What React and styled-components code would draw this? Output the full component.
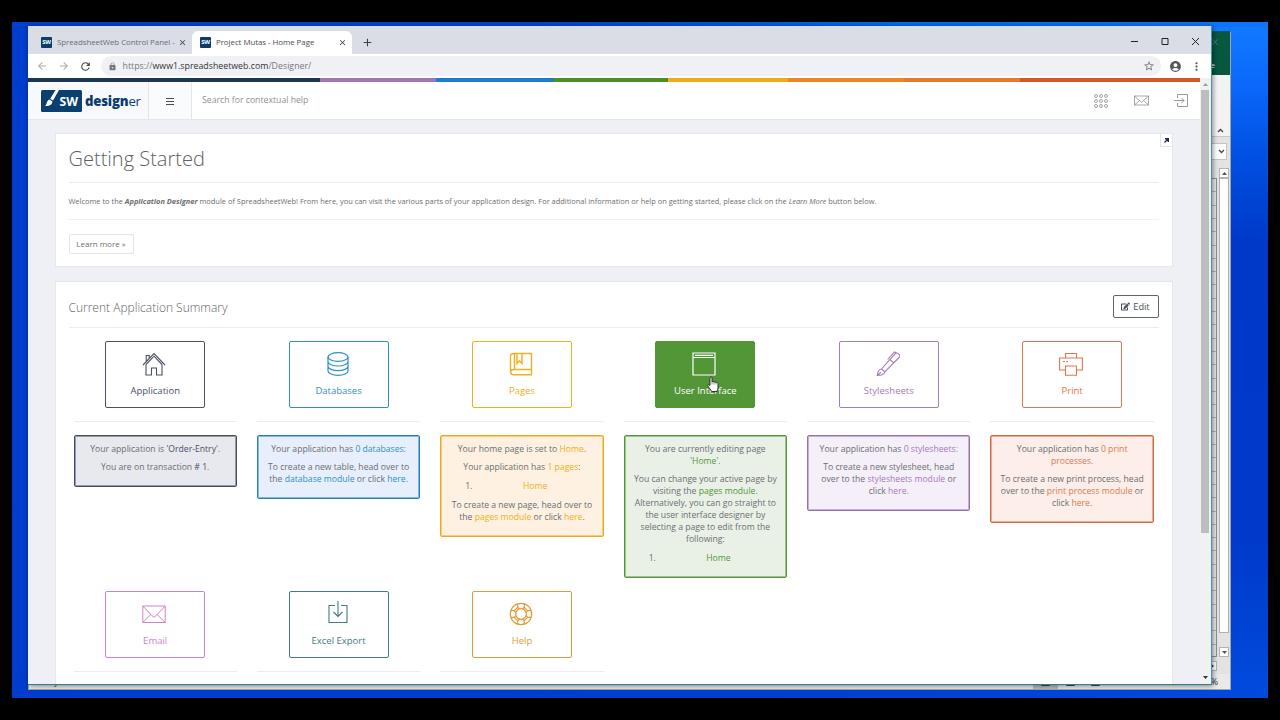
import styled, { createGlobalStyle } from "styled-components";
import { FaEdit } from "react-icons/fa";
import {
  MdAccountCircle,
  MdAdd,
  MdArrowBack,
  MdArrowForward,
  MdClose,
  MdLock,
  MdMoreVert,
  MdRefresh,
  MdStarBorder,
} from "react-icons/md";

const GlobalStyle = createGlobalStyle`
  * {
    box-sizing: border-box;
  }
  body {
    margin: 0;
    background: #000;
    font-family: "Open Sans", "Noto Sans", sans-serif;
    color: #6b6e71;
  }
`;

const Screen = styled.div`
  width: 1280px;
  height: 720px;
  padding: 22px 12px;
  background: #000;
  overflow: hidden;
`;
const Desktop = styled.div`
  position: relative;
  height: 676px;
  overflow: hidden;
  background:
    linear-gradient(90deg, #0040cc 0, #0044d2 42%, #0069ee 70%, #0f74fa 100%) top / 100% 5px no-repeat,
    linear-gradient(180deg, #1279ff 0, #0a68fa 60px, #0050e2 130px, #0039c8 215px, #003acb 520px, #004bdc 670px) right / 60px 669px no-repeat,
    linear-gradient(90deg, #003dcc 0, #003fd0 60%, #004bdc 100%);
`;

/* spreadsheet window behind the browser */
const SheetWindow = styled.div`
  position: absolute;
  left: 16px;
  top: 9px;
  width: 1203px;
  height: 659px;
  display: flex;
  flex-direction: column;
  background: #e3e3e3;
  border: 1px solid #9aa6ac;
  border-top-color: #0d5a58;
`;
const SheetTitle = styled.div`
  height: 43px;
  padding: 5px 10px 0 0;
  background: #08573f;
  color: #45776a;
  display: flex;
  flex-direction: column;
  align-items: flex-end;
  justify-content: space-between;
`;
const SheetShare = styled.span`
  margin-right: 5px;
  font-size: 8px;
  line-height: 14px;
  height: 17px;
  color: #fff;
`;
const SheetRibbon = styled.div`
  height: 62px;
  background: #f3f3f3;
  border-bottom: 1px solid #c8c8c8;
  display: flex;
  justify-content: flex-end;
  align-items: flex-end;
  padding: 0 6px 3px;
`;
const FormulaBar = styled.div`
  height: 31px;
  padding: 6px 3px 7px;
`;
const FormulaInput = styled.div`
  height: 17px;
  background: #fff;
  border: 1px solid #c4c4c4;
  display: flex;
  justify-content: flex-end;
  align-items: center;
  padding-right: 1px;
`;
const SheetBody = styled.div`
  flex: 1;
  min-height: 0;
  display: flex;
  justify-content: flex-end;
  gap: 2px;
  padding-right: 1px;
`;
const SheetLeft = styled.div`
  width: 40px;
  padding-top: 10px;
  display: flex;
  flex-direction: column;
  align-items: flex-end;
  gap: 4px;
`;
const SheetCells = styled.div`
  width: 39px;
  height: 479px;
  border: 1px solid #8e8e8e;
  background: repeating-linear-gradient(#e9e9e9 0 12.3px, #b4b4b4 12.3px 13.3px);
`;
const SheetScroll = styled.div`
  width: 10px;
  display: flex;
  flex-direction: column;
`;
const ScrollButton = styled.div`
  width: 10px;
  height: 10px;
  flex-shrink: 0;
  border: 1px solid #b4b4b4;
  background: #fff;
  display: flex;
  align-items: center;
  justify-content: center;
`;
const SheetThumb = styled.div`
  height: 455px;
  margin-bottom: 14px;
  flex-shrink: 0;
  background: #fff;
  border: 1px solid #b0b0b0;
`;
const StatusBar = styled.div`
  height: 15px;
  display: flex;
  justify-content: space-between;
  padding: 0 12px 0 5px;
  background: #e9e9e8;
  color: #333;
  font-size: 8.5px;
  line-height: 15px;
`;
const ViewButtons = styled.span`
  margin-left: auto;
  margin-right: 103px;
  display: flex;
  svg {
    width: 25px;
    height: 15px;
    background: transparent;
  }
  svg:first-child {
    background: #b9b9b8;
  }
`;

/* browser window */
const Browser = styled.div`
  position: absolute;
  left: 16px;
  top: 4px;
  width: 1184px;
  height: 659px;
  display: flex;
  flex-direction: column;
  background: #fff;
  border-right: 1px solid #3c93dc;
  border-bottom: 1px solid #2a7e9c;
  box-shadow: 1px 1px 5px rgba(0, 0, 0, 0.45);
`;
const TabStrip = styled.div`
  height: 28px;
  display: flex;
  align-items: flex-end;
  background: #dadde6;
  padding-left: 5px;
`;
const Tab = styled.div`
  width: ${(p) => p.$width}px;
  height: 23px;
  display: flex;
  align-items: center;
  padding: 0 5px 0 8px;
  font-size: 7.9px;
  letter-spacing: -0.05px;
  color: ${(p) => (p.$active ? "#4a4d52" : "#6a6e75")};
  background: ${(p) => (p.$active ? "#fff" : "transparent")};
  border-radius: 6px 6px 0 0;
  svg {
    color: #3c4043;
  }
`;
const TabTitle = styled.span`
  flex: 1;
  margin-left: 5px;
  padding-bottom: 1px;
  white-space: nowrap;
`;
const Favicon = styled.span`
  width: 11px;
  height: 11px;
  border-radius: 1px;
  background: #0b3c6c;
  color: #fff;
  font: 700 6px/10px "Open Sans", sans-serif;
  letter-spacing: -0.4px;
  text-align: center;
`;
const NewTab = styled.div`
  height: 23px;
  display: flex;
  align-items: center;
  padding-left: 9px;
  color: #3c4043;
`;
const WindowButtons = styled.div`
  margin-left: auto;
  height: 28px;
  padding: 4px 11px 0 0;
`;
const Toolbar = styled.div`
  height: 24px;
  display: flex;
  align-items: center;
  padding: 0 8px;
  color: #55585c;
`;
const NavIcon = styled.span`
  width: 21.5px;
  display: flex;
  color: ${(p) => (p.$dim ? "#a9abae" : "#44474b")};
`;
const AddressBar = styled.div`
  flex: 1;
  height: 20px;
  padding: 0 6px 0 7px;
  display: flex;
  align-items: center;
  background: #f0f1f4;
  border-radius: 10px;
  font-size: 8.8px;
  color: #75797e;
`;
const Url = styled.span`
  flex: 1;
  margin-left: 6px;
  b {
    font-weight: 400;
    color: #303236;
  }
`;
const ToolbarMenu = styled.div`
  display: flex;
  gap: 8px;
  margin-left: 8px;
`;
const Viewport = styled.div`
  flex: 1;
  min-height: 0;
  display: flex;
`;
const Page = styled.div`
  width: 1172px;
  display: flex;
  flex-direction: column;
  background: #eff0f6;
  overflow: hidden;
`;
const PageScrollbar = styled.div`
  flex: 1;
  display: flex;
  flex-direction: column;
  align-items: center;
  padding-right: 1px;
  background: #f2f1f2;
`;
const ScrollArrow = styled.div`
  height: 12px;
  display: flex;
  align-items: center;
`;
const ScrollThumb = styled.div`
  width: 8px;
  height: 443px;
  background: #bdbdbf;
  margin-bottom: 143px;
`;
const ColorBar = styled.div`
  height: 4px;
  flex-shrink: 0;
  display: flex;
`;
const ColorPart = styled.div`
  flex: ${(p) => p.$size};
  background: ${(p) => p.$color};
`;

/* designer page */
const Header = styled.header`
  height: 38px;
  flex-shrink: 0;
  display: flex;
  align-items: stretch;
  background: #fff;
  border-bottom: 1px solid #e5e6ea;
`;
const LogoBox = styled.div`
  width: 121px;
  padding-left: 12.5px;
  background: #f8f9fc;
  border-right: 1px solid #e5e6ea;
  display: flex;
  align-items: center;
`;
const LogoText = styled.span`
  margin-left: 3.5px;
  font: 800 13.2px/20px "Open Sans", sans-serif;
  letter-spacing: -0.2px;
  color: #0b3c6c;
  span {
    font-weight: 400;
  }
`;
const MenuButton = styled.div`
  width: 43px;
  background: #fafbfd;
  border-right: 1px solid #e5e6ea;
  display: flex;
  align-items: center;
  justify-content: center;
`;
const Search = styled.div`
  flex: 1;
  padding-left: 10px;
  font-size: 8.7px;
  line-height: 36px;
  color: #8e9093;
`;
const HeaderIcons = styled.div`
  display: flex;
  align-items: center;
  gap: 25.5px;
  padding-right: 12px;
`;
const Content = styled.main`
  padding: 13px 27.5px 0 27px;
  display: flex;
  flex-direction: column;
  gap: 14px;
`;
const Panel = styled.section`
  height: ${(p) => p.$height}px;
  padding: 0 13px 0 12.5px;
  background: #fff;
  border: 1px solid #e6e7ed;
  position: relative;
`;
const Corner = styled.div`
  position: absolute;
  top: 0;
  right: 0;
  width: 12px;
  height: 13px;
  border: solid #e0e2ea;
  border-width: 0 0 1px 1px;
  display: flex;
  align-items: center;
  justify-content: center;
`;
const Title = styled.h1`
  margin: 0;
  height: 49px;
  font-size: 20px;
  font-weight: 300;
  line-height: 49px;
  color: #5d5f61;
  border-bottom: 1px solid #ececee;
`;
const Intro = styled.p`
  margin: 0;
  height: 37px;
  font-size: 7.44px;
  line-height: 37px;
  border-bottom: 1px solid #f0f0f1;
`;
const LearnMore = styled.button`
  display: block;
  margin-top: 14px;
  width: 65px;
  height: 20px;
  padding: 0 0 1px;
  background: #fff;
  border: 1px solid #e4e5e7;
  border-radius: 2px;
  font: 8px "Open Sans", sans-serif;
  color: #6b6e71;
`;
const SummaryHead = styled.div`
  height: 46px;
  display: flex;
  justify-content: space-between;
  border-bottom: 1px solid #ececee;
`;
const SummaryTitle = styled.h2`
  margin: 0;
  font-size: 12px;
  font-weight: 300;
  line-height: 52px;
  color: #5d5f61;
`;
const EditButton = styled.button`
  margin-top: 13px;
  width: 46px;
  height: 23px;
  padding: 0 0 1px;
  display: flex;
  align-items: center;
  justify-content: center;
  gap: 3px;
  background: #fff;
  border: 1px solid #5d6475;
  border-radius: 2px;
  font: 9.2px "Open Sans", sans-serif;
  color: #454b5c;
`;
const ModuleGrid = styled.div`
  display: grid;
  grid-template-columns: repeat(6, 163.4px);
  column-gap: 20px;
  grid-template-rows: 249.5px auto;
  padding: 13px 0 0 5px;
`;
const Module = styled.div`
  display: flex;
  flex-direction: column;
  align-items: center;
`;
const Tile = styled.div`
  position: relative;
  width: 100px;
  height: 67px;
  padding-top: 9px;
  display: flex;
  flex-direction: column;
  align-items: center;
  border: 1px solid ${(p) => p.$color};
  border-radius: 2px;
  background: ${(p) => (p.$active ? p.$color : "#fff")};
  color: ${(p) => (p.$active ? "#fff" : p.$color)};
  font-size: 9.5px;
  line-height: 14px;
`;
const TileIcon = styled.span`
  display: flex;
  margin: 0 2px 7px 0;
`;
const Cursor = styled.div`
  position: absolute;
  left: 51px;
  top: 34px;
  display: flex;
`;
const Divider = styled.div`
  width: 100%;
  height: 1px;
  flex-shrink: 0;
  margin: 13px 0;
  background: #ededef;
`;
const Info = styled.div`
  width: 100%;
  padding: 6.500px 5px 13px;
  border: 1px solid ${(p) => p.$color};
  box-shadow: inset 0 0 0 1px ${(p) => p.$color}80;
  border-radius: 2px;
  background: ${(p) => p.$fill};
  font-size: 8.64px;
  line-height: 12px;
  text-align: center;
  p {
    margin: 0 0 6.7px;
  }
  > :last-child {
    margin-bottom: 0;
  }
  em {
    font-style: normal;
    color: ${(p) => p.$link};
  }
`;
const PageList = styled.div`
  display: flex;
  margin-bottom: 6.7px;
  padding-left: 19px;
  span:last-child {
    flex: 1;
    color: ${(p) => p.$color};
  }
`;

const Line = ({ width = 1, children }) => (
  <svg width="24" height="26" viewBox="0 0 24 26" fill="none" stroke="currentColor" strokeWidth={width}>
    {children}
  </svg>
);

const HomeIcon = () => (
  <Line width={1.1}>
    <path d="M1 14 12 2.5 23 14M4 13.500V24h5.500v-7h5v7H20V13.500M4.200 10V4.500h3V7" />
    <path d="M4 13.500 12 5.200l8 8.300" />
  </Line>
);
const DatabaseIcon = () => (
  <Line width={1.2}>
    <ellipse cx="12" cy="6" rx="10" ry="4.300" />
    <path d="M2 6v14c0 2.400 4.500 4.300 10 4.300s10-1.900 10-4.300V6M2 10.700C2 13 6.500 15 12 15s10-2 10-4.300M2 15.300c0 2.400 4.500 4.300 10 4.300s10-1.900 10-4.300" />
  </Line>
);
const BookIcon = () => (
  <Line width={1.4}>
    <path d="M22.500 18V2.500H5C3 2.500 1.500 3.500 1.500 5.500V20c0 2.500 1.500 3.800 3.500 3.800h17.500V18.500H5c-2 0-3.500.8-3.500 2.500M5.500 2.500v16M8 2.500v10l2.500-2.700L13 12.500v-10" />
  </Line>
);
const WindowIcon = () => (
  <Line width={1.2}>
    <path d="M1 2h22v22H1zM1 6.500h22M3 4.300h18" />
  </Line>
);
const PenIcon = () => (
  <Line width={1.1}>
    <path d="M5.500 18 19 2.800c1-1 2-1 3-.2l1.300 1.100c.9.900.7 1.800-.2 2.800L8.800 20.800M5.500 18l3.300 2.800c-.5 2-3 3.700-7.500 3.700.3-3.500 1.200-5.900 4.200-6.500zM1.500 24.500l3.500-3.300M14 8.500l3.500 3.200M11.700 8.500 18.500 1l2.300 1" />
  </Line>
);
const PrinterIcon = () => (
  <Line width={1.1}>
    <path d="M6.500 7V2.500h11V7M6.500 19H.6V7h22.800v12h-5.900M6.500 15h11v9.300h-11zM4 10.500h2M7 10.500h2" />
  </Line>
);
const MailIcon = () => (
  <Line>
    <path d="M.8 5h22.400v16.500H.8zM.8 5l8.700 9.300 2.500 2 2.500-2L23.200 5M.8 21.500l8-8M23.200 21.500l-8-8" />
  </Line>
);
const ExportIcon = () => (
  <Line width={1.1}>
    <path d="M9 4.500H3v17h18v-17h-6M12 0v15.500M7.500 11l4.500 4.500 4.500-4.500" />
  </Line>
);
const HelpIcon = () => (
  <Line width={1.2}>
    <circle cx="12" cy="13" r="10.700" />
    <circle cx="12" cy="13" r="5.300" />
    <path d="M8.700 2.800v3.500L10.500 8M15.300 2.800v3.500L13.500 8M8.700 23.200v-3.500l1.800-1.700M15.300 23.200v-3.500L13.500 18M1.800 9.700h3.500L7 11.500M1.800 16.300h3.500L7 14.500M22.200 9.700h-3.500L17 11.500M22.200 16.300h-3.500L17 14.500M5.300 9.700l3.400-3.400M18.700 9.700l-3.400-3.400M5.300 16.300l3.400 3.400M18.700 16.300l-3.400 3.400" />
  </Line>
);

const Triangle = ({ down, color = "#555" }) => (
  <svg width="5" height="3" viewBox="0 0 5 3">
    <path d={down ? "M0 0h5L2.500 3z" : "M0 3h5L2.500 0z"} fill={color} />
  </svg>
);
const Chevron = ({ down }) => (
  <svg width="7" height="5" viewBox="0 0 7 5" fill="none" stroke="#444" strokeWidth="1.300">
    <path d={down ? "M1 1l2.500 2.500L6 1" : "M1 4l2.500-2.500L6 4"} />
  </svg>
);

const HandCursor = () => (
  <svg width="13" height="17" viewBox="0 0 13 17">
    <path
      d="M3 9.500V2c0-1.500 2-1.500 2 0v4c.3-.8 2-.7 2 .3.400-.7 2-.5 2 .4.500-.6 2-.3 2 .9V11c0 2-.8 3-1 4.500H4.500C4 13.500 2 12 .8 10c-.5-1 .7-2 2.200-.5z"
      fill="#fff"
      stroke="#222"
      strokeWidth=".9"
    />
    <path d="M5 6v2.500M7 6.300v2.200M9 7v1.500" stroke="#222" strokeWidth=".5" />
  </svg>
);

const barColors = [
  [292, "#1d3557"],
  [116, "#a374b5"],
  [118, "#1c7cd0"],
  [114, "#4c8f28"],
  [120, "#f0aa18"],
  [116, "#ee8722"],
  [116, "#e67a2c"],
  [180, "#d8562a"],
];

const modules = [
  {
    name: "Application",
    color: "#4a5165",
    border: "#454b64",
    fill: "#e8e8ef",
    icon: HomeIcon,
    info: (
      <>
        <p>Your application is <em>'Order-Entry'</em>.</p>
        <p>You are on transaction <em># 1</em>.</p>
      </>
    ),
  },
  {
    name: "Databases",
    color: "#2e8fc9",
    border: "#2580c0",
    fill: "#e6effb",
    icon: DatabaseIcon,
    info: (
      <>
        <p>Your application has <em>0 databases:</em></p>
        <p>To create a new table, head over to<br />the <em>database module</em> or click <em>here.</em></p>
      </>
    ),
  },
  {
    name: "Pages",
    color: "#edb021",
    border: "#eba91c",
    fill: "#fef1e2",
    icon: BookIcon,
    info: (
      <>
        <p>Your home page is set to <em>Home</em>.</p>
        <p>Your application has <em>1 pages</em>:</p>
        <PageList $color="#edb021"><span>1.</span><span>Home</span></PageList>
        <p>To create a new page, head over to<br />the <em>pages module</em> or click <em>here</em>.</p>
      </>
    ),
  },
  {
    name: "User Interface",
    color: "#529638",
    border: "#529638",
    fill: "#e9f1e7",
    icon: WindowIcon,
    active: true,
    info: (
      <>
        <p>You are currently editing page<br /><em>'Home'</em>.</p>
        <p>
          You can change your active page by<br />visiting the <em>pages module</em>.<br />
          Alternatively, you can go straight to<br />the user interface designer by<br />
          selecting a page to edit from the<br />following:
        </p>
        <PageList $color="#529638"><span>1.</span><span>Home</span></PageList>
      </>
    ),
  },
  {
    name: "Stylesheets",
    color: "#a57bb8",
    border: "#9871a8",
    fill: "#f5effa",
    icon: PenIcon,
    info: (
      <>
        <p>Your application has <em>0 stylesheets:</em></p>
        <p>To create a new stylesheet, head<br />over to the <em>stylesheets module</em> or<br />click <em>here.</em></p>
      </>
    ),
  },
  {
    name: "Print",
    color: "#dc7850",
    border: "#cf6c42",
    fill: "#fdeee9",
    icon: PrinterIcon,
    info: (
      <>
        <p>Your application has <em>0 print<br />processes.</em></p>
        <p>To create a new print process, head<br />over to the <em>print process module</em> or<br />click <em>here</em>.</p>
      </>
    ),
  },
  { name: "Email", color: "#cd84c4", icon: MailIcon },
  { name: "Excel Export", color: "#447b82", icon: ExportIcon },
  { name: "Help", color: "#e39a3c", icon: HelpIcon },
];

const SheetBackground = () => (
  <SheetWindow>
    <SheetTitle>
      <MdClose size={10} />
      <SheetShare>e</SheetShare>
    </SheetTitle>
    <SheetRibbon>
      <Chevron />
    </SheetRibbon>
    <FormulaBar>
      <FormulaInput>
        <Chevron down />
      </FormulaInput>
    </FormulaBar>
    <SheetBody>
      <SheetLeft>
        <SheetCells />
        <ScrollButton>
          <svg width="4" height="6" viewBox="0 0 4 6">
            <path d="M0 0l4 3-4 3z" fill="#333" />
          </svg>
        </ScrollButton>
      </SheetLeft>
      <SheetScroll>
        <ScrollButton><Triangle /></ScrollButton>
        <SheetThumb />
        <ScrollButton><Triangle down /></ScrollButton>
      </SheetScroll>
    </SheetBody>
    <StatusBar>
      <span>Ready</span>
      <ViewButtons>
        {[0, 1, 2].map((i) => (
          <svg key={i} viewBox="0 0 25 15" fill="none" stroke="#444">
            <path d="M8.500 3.500h8v8h-8zM8.500 9.500h8" />
          </svg>
        ))}
      </ViewButtons>
      <span>%</span>
    </StatusBar>
  </SheetWindow>
);

const BrowserChrome = () => (
  <>
    <TabStrip>
      <Tab $width={159}>
        <Favicon>SW</Favicon>
        <TabTitle>SpreadsheetWeb Control Panel -</TabTitle>
        <MdClose size={9} />
      </Tab>
      <Tab $width={160} $active>
        <Favicon>SW</Favicon>
        <TabTitle>Project Mutas - Home Page</TabTitle>
        <MdClose size={9} />
      </Tab>
      <NewTab>
        <MdAdd size={13} />
      </NewTab>
      <WindowButtons>
        <svg width="70" height="11" viewBox="0 0 70 11" fill="none" stroke="#222" strokeWidth="1">
          <path d="M1 5.500h7M32 2.500h6v6h-6zM62 2l7 7M69 2l-7 7" />
        </svg>
      </WindowButtons>
    </TabStrip>
    <Toolbar>
      <NavIcon $dim><MdArrowBack size={12} /></NavIcon>
      <NavIcon $dim><MdArrowForward size={12} /></NavIcon>
      <NavIcon><MdRefresh size={13} /></NavIcon>
      <AddressBar>
        <MdLock size={9} />
        <Url>https://<b>www1.spreadsheetweb.com</b>/Designer/</Url>
        <MdStarBorder size={12} />
      </AddressBar>
      <ToolbarMenu>
        <MdAccountCircle size={13} />
        <MdMoreVert size={13} />
      </ToolbarMenu>
    </Toolbar>
  </>
);

const PageHeader = () => (
  <Header>
    <LogoBox>
      <svg width="41" height="22" viewBox="0 0 41 22">
        <rect width="41" height="22" rx="1.500" fill="#0b3f70" />
        <path d="M14.500 0H18l-6 10.500-2.800-1.800zM8.500 9.500l2.800 2c.2 3-3 5-7.300 4.500 2-1 1.300-5.500 4.500-6.500z" fill="#fff" />
        <text x="18.500" y="15.500" fill="#fff" fontFamily="Open Sans" fontWeight="700" fontSize="11.500" textLength="18.500" lengthAdjust="spacingAndGlyphs">
          SW
        </text>
      </svg>
      <LogoText>design<span>er</span></LogoText>
    </LogoBox>
    <MenuButton>
      <svg width="8" height="8" viewBox="0 0 8 8" stroke="#4a4c50" strokeWidth="1">
        <path d="M0 1.500h8M0 4.500h8M0 7.500h8" />
      </svg>
    </MenuButton>
    <Search>Search for contextual help</Search>
    <HeaderIcons>
      <svg width="14" height="14" viewBox="0 0 14 14" fill="none" stroke="#97999c" strokeWidth=".9">
        {[2, 7, 12].map((y) => [2, 7, 12].map((x) => <circle key={`${x}-${y}`} cx={x} cy={y} r="1.500" />))}
      </svg>
      <svg width="15" height="11" viewBox="0 0 15 11" fill="none" stroke="#8d8f92" strokeWidth=".8">
        <path d="M.5 1h14v9H.5zM.5 1l5.500 5 1.500 1.200L9 6l5.500-5M.5 10l5-4.500M14.500 10l-5-4.500" />
      </svg>
      <svg width="14" height="13" viewBox="0 0 14 13" fill="none" stroke="#8d8f92" strokeWidth=".9">
        <path d="M3.500 4V.5h10v12h-10V9M0 6.500h10M7.500 4 10 6.500 7.500 9" />
      </svg>
    </HeaderIcons>
  </Header>
);

const ModuleCard = ({ item }) => {
  const Icon = item.icon;
  return (
    <Module>
      <Tile $color={item.color} $active={item.active}>
        <TileIcon>
          <Icon />
        </TileIcon>
        {item.name}
        {item.active && (
          <Cursor>
            <HandCursor />
          </Cursor>
        )}
      </Tile>
      <Divider />
      {item.info && (
        <Info $color={item.border} $fill={item.fill} $link={item.color}>
          {item.info}
        </Info>
      )}
    </Module>
  );
};

export default function App() {
  return (
    <Screen>
      <GlobalStyle />
      <Desktop>
        <SheetBackground />
        <Browser>
          <BrowserChrome />
          <Viewport>
            <Page>
              <ColorBar>
                {barColors.map(([size, color]) => (
                  <ColorPart key={color} $size={size} $color={color} />
                ))}
              </ColorBar>
              <PageHeader />
              <Content>
                <Panel $height={134}>
                  <Corner>
                    <svg width="5" height="5" viewBox="0 0 5 5" fill="none" stroke="#1f2a55" strokeWidth="1.400">
                      <path d="M.5 4.500 4 1M1 .8h3.300V4" />
                    </svg>
                  </Corner>
                  <Title>Getting Started</Title>
                  <Intro>
                    Welcome to the <b><i>Application Designer</i></b> module of SpreadsheetWeb! From here, you can visit the various parts of your
                    application design. For additional information or help on getting started, please click on the <i>Learn More</i> button below.
                  </Intro>
                  <LearnMore>Learn more »</LearnMore>
                </Panel>
                <Panel $height={420}>
                  <SummaryHead>
                    <SummaryTitle>Current Application Summary</SummaryTitle>
                    <EditButton>
                      <FaEdit size={9} /> Edit
                    </EditButton>
                  </SummaryHead>
                  <ModuleGrid>
                    {modules.map((item) => (
                      <ModuleCard key={item.name} item={item} />
                    ))}
                  </ModuleGrid>
                </Panel>
              </Content>
            </Page>
            <PageScrollbar>
              <ScrollArrow>
                <Triangle color="#9a9a9a" />
              </ScrollArrow>
              <ScrollThumb />
              <Triangle down color="#333" />
            </PageScrollbar>
          </Viewport>
        </Browser>
      </Desktop>
    </Screen>
  );
}
